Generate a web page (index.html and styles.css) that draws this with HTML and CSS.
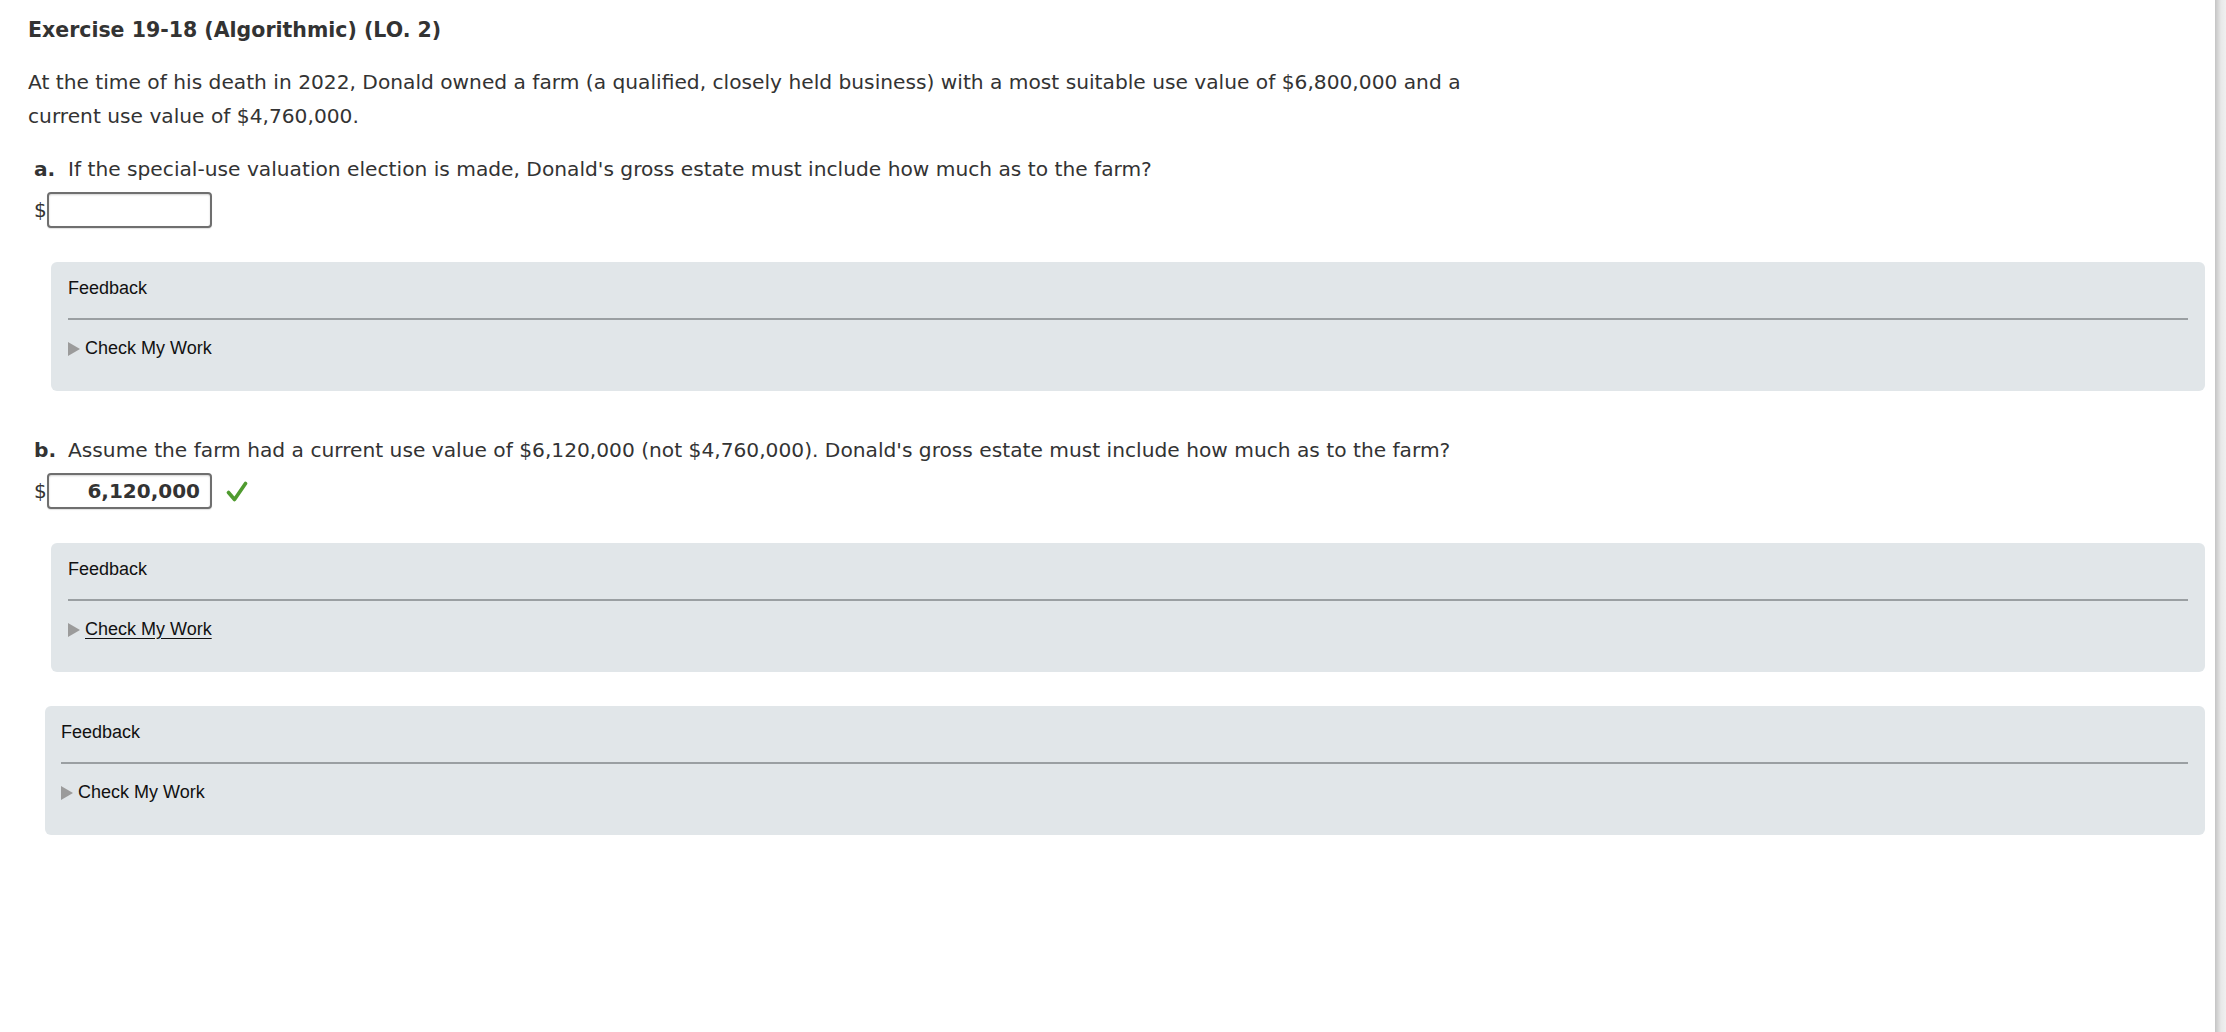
FILE: index.html
```html
<!DOCTYPE html>
<html>
<head>
<meta charset="utf-8">
<link rel="stylesheet" href="styles.css">
</head>
<body>
<div class="frame">
  <main class="page">
    <h1 class="title">Exercise 19-18 (Algorithmic) (LO. 2)</h1>
    <p class="intro">At the time of his death in 2022, Donald owned a farm (a qualified, closely held business) with a most suitable use value of $6,800,000 and a<br>current use value of $4,760,000.</p>

    <div class="question">
      <div class="q-line"><span class="q-label">a.</span>If the special-use valuation election is made, Donald's gross estate must include how much as to the farm?</div>
      <div class="answer-row"><span class="dollar">$</span><span class="answer-box"></span></div>
      <div class="feedback">
        <div class="fb-head">Feedback</div>
        <div class="fb-rule"></div>
        <div class="fb-check"><span class="tri"></span><span class="cmw">Check My Work</span></div>
      </div>
    </div>

    <div class="question">
      <div class="q-line"><span class="q-label">b.</span>Assume the farm had a current use value of $6,120,000 (not $4,760,000). Donald's gross estate must include how much as to the farm?</div>
      <div class="answer-row"><span class="dollar">$</span><span class="answer-box filled">6,120,000</span>
        <svg class="check" width="22" height="21" viewBox="0 0 22 21"><path d="M2.5 11.5 L8.5 18.5 L19.5 2.5" fill="none" stroke="#4f9b2f" stroke-width="3.6" stroke-linecap="round" stroke-linejoin="round"/></svg>
      </div>
      <div class="feedback">
        <div class="fb-head">Feedback</div>
        <div class="fb-rule"></div>
        <div class="fb-check"><span class="tri"></span><span class="cmw link">Check My Work</span></div>
      </div>
    </div>

    <div class="feedback outer">
      <div class="fb-head">Feedback</div>
      <div class="fb-rule"></div>
      <div class="fb-check"><span class="tri"></span><span class="cmw">Check My Work</span></div>
    </div>
  </main>
  <div class="scrolltrack"></div>
</div>
</body>
</html>
```

FILE: styles.css
```css
html, body {
  margin: 0;
  padding: 0;
  background: #ffffff;
}
.frame {
  display: flex;
  min-height: 1032px;
}
.page {
  flex: 1;
  padding: 18px 10px 0 28px;
  font-family: "DejaVu Sans", Verdana, sans-serif;
  color: #333333;
}
.scrolltrack {
  width: 11px;
  flex: none;
  background: linear-gradient(to right, #c4c4c4 0, #d6d6d6 3px, #e8e8e8 6px, #f0f0f0 11px);
}
.title {
  margin: 0;
  font-size: 20.5px;
  line-height: 24px;
  font-weight: bold;
  color: #333333;
}
.intro {
  margin: 23px 0 0 0;
  font-size: 20.2px;
  line-height: 34px;
}
.question {
  margin-top: 19px;
}
.question + .question {
  margin-top: 42px;
}
.q-line {
  font-size: 20.2px;
  line-height: 34px;
  padding-left: 6px;
}
.q-label {
  display: inline-block;
  width: 34px;
  font-weight: bold;
}
.answer-row {
  display: flex;
  align-items: center;
  margin-top: 6px;
  padding-left: 6px;
  height: 36px;
}
.dollar {
  font-size: 20px;
  color: #333;
  width: 13px;
}
.answer-box {
  box-sizing: border-box;
  width: 165px;
  height: 36px;
  border: 2px solid #6f6f6f;
  border-radius: 4px;
  box-shadow: inset 0 1px 2px rgba(0,0,0,0.18), 0 1px 1px rgba(0,0,0,0.12);
  background: #fff;
  font-size: 20px;
  font-weight: bold;
  color: #333;
  text-align: right;
  padding: 0 10px;
  line-height: 32px;
}
.check {
  margin-left: 14px;
}
.feedback {
  margin: 34px 0 0 23px;
  background: #e1e6e9;
  border-radius: 6px;
  padding: 16px 17px 32px 17px;
  font-family: "Liberation Sans", Arial, Helvetica, sans-serif;
  color: #111;
}
.feedback.outer {
  margin: 34px 0 0 17px;
  padding-left: 16px;
}
.fb-head {
  font-size: 18px;
  line-height: 21px;
}
.fb-rule {
  margin-top: 19px;
  height: 2px;
  background: #9a9fa2;
}
.fb-check {
  margin-top: 18px;
  display: flex;
  align-items: center;
  font-size: 18px;
  line-height: 21px;
}
.tri {
  width: 0;
  height: 0;
  border-top: 7px solid transparent;
  border-bottom: 7px solid transparent;
  border-left: 12px solid #9b9b9b;
  margin-right: 5px;
}
.cmw.link {
  text-decoration: underline;
  text-underline-offset: 3px;
}
```
